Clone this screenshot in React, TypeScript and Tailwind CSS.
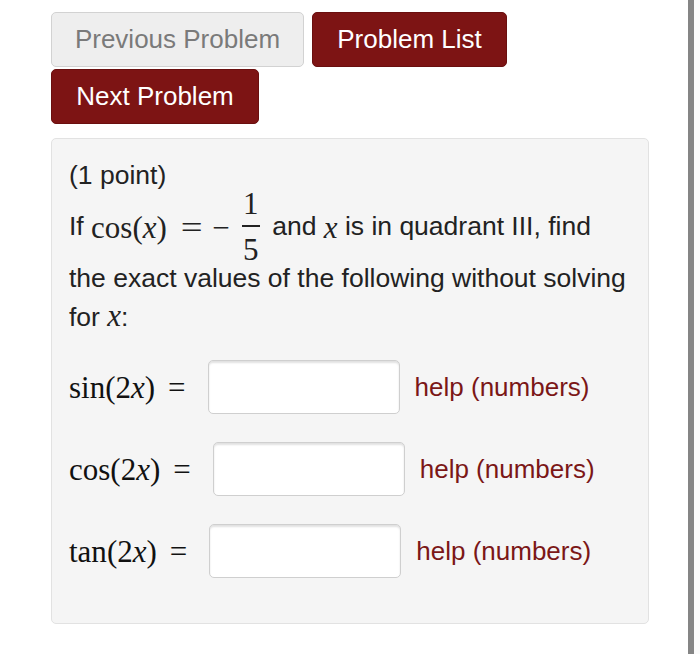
import React from "react";

const serif = "font-['Liberation_Serif','Times_New_Roman',serif]";

function MathX() {
  return <span className="italic">x</span>;
}

function AnswerRow({ fn }: { fn: string }) {
  return (
    <div className="flex h-[54px] items-center">
      <span className={`${serif} text-[31px] leading-none text-[#111]`}>
        {fn}(2<MathX />)<span className="ml-[13px]">=</span>
      </span>
      <input
        type="text"
        className="ml-[22px] h-[54px] w-[192px] rounded-[5px] border border-[#cfcfcf] bg-white shadow-[inset_0_2px_2px_rgba(0,0,0,0.12)] outline-none"
      />
      <a className="ml-[15px] text-[26px] text-[#7b1717]">help (numbers)</a>
    </div>
  );
}

export default function App() {
  return (
    <div className="flex min-h-[654px] bg-white font-['Liberation_Sans',Arial,sans-serif]">
      <div className="w-[688px] pl-[51px] pt-[12px]">
        {/* Nav buttons */}
        <div className="flex gap-[8px]">
          <button className="flex h-[55px] w-[253px] items-center justify-center rounded-[5px] border border-[#d2d2d2] bg-[#eeeeee] text-[26px] text-[#7a7a7a]">
            Previous Problem
          </button>
          <button className="flex h-[55px] w-[195px] items-center justify-center rounded-[5px] border border-[#6a0f0f] bg-[#7d1414] text-[26px] text-white">
            Problem List
          </button>
        </div>
        <div className="mt-[2px] flex">
          <button className="flex h-[55px] w-[208px] items-center justify-center rounded-[5px] border border-[#6a0f0f] bg-[#7d1414] text-[26px] text-white">
            Next Problem
          </button>
        </div>

        {/* Problem panel */}
        <div className="mt-[14px] h-[486px] w-[598px] rounded-[5px] border border-[#e2e2e2] bg-[#f5f5f5] px-[17px] pt-[18px] text-[26.5px] text-[#222]">
          <div className="leading-[37px]">(1 point)</div>
          <div className="flex h-[66px] items-center whitespace-pre">
            <span>If </span>
            <span className={`${serif} text-[31px] leading-none`}>
              cos(<MathX />)
            </span>
            <span className={`${serif} ml-[16px] inline-block scale-x-[1.25] text-[31px] leading-none`}>=</span>
            <span className={`${serif} ml-[12px] text-[31px] leading-none`}>−</span>
            <span className={`${serif} ml-[12px] inline-flex flex-col items-center text-[31px] leading-[22px]`}>
              <span>1</span>
              <span className="mb-[12px] mt-[10px] h-[2px] w-[18px] bg-[#222]" />
              <span>5</span>
            </span>
            <span className="ml-[5px]"> and </span>
            <span className={`${serif} text-[31px] leading-none`}>
              <MathX />
            </span>
            <span> is in quadrant III, find</span>
          </div>
          <div className="leading-[37px]">
            the exact values of the following without solving
            <br />
            for <span className={`${serif} text-[31px]`}><MathX /></span>:
          </div>

          <div className="mt-[24px] flex flex-col gap-[28px]">
            <AnswerRow fn="sin" />
            <AnswerRow fn="cos" />
            <AnswerRow fn="tan" />
          </div>
        </div>
      </div>
      <div className="w-[6px] bg-[#858585]" />
      <div className="flex-1 bg-[#fafafa]" />
    </div>
  );
}
